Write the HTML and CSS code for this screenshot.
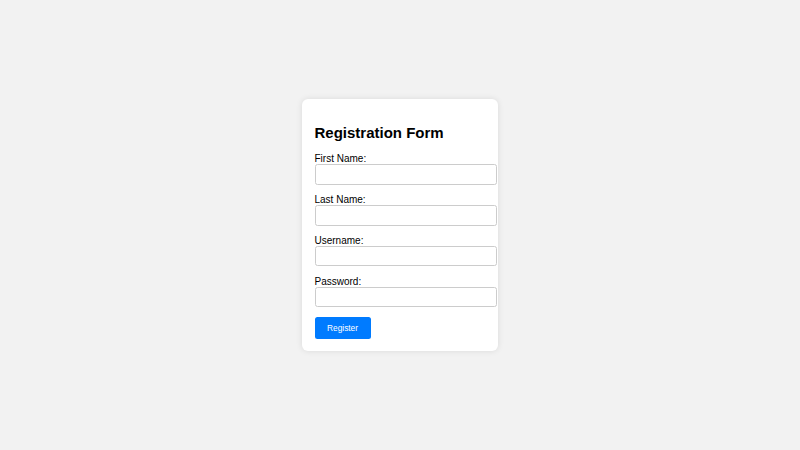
FILE: index.html
```html
<!DOCTYPE html>
<html lang="en">
<head>
<meta charset="utf-8">
<title>Registration Form</title>
<link rel="stylesheet" href="styles.css">
</head>
<body>
<div class="card">
  <h2 class="title">Registration Form</h2>
  <form class="form">
    <label class="label" for="first">First Name:</label>
    <input class="input" type="text" id="first">
    <label class="label" for="last">Last Name:</label>
    <input class="input" type="text" id="last">
    <label class="label" for="user">Username:</label>
    <input class="input" type="text" id="user">
    <label class="label" for="pass">Password:</label>
    <input class="input" type="password" id="pass">
    <button class="btn" type="button">Register</button>
  </form>
</div>
</body>
</html>
```

FILE: styles.css
```css
html, body {
  margin: 0;
  padding: 0;
}
body {
  background: #f2f2f2;
  font-family: "Liberation Sans", Arial, sans-serif;
  height: 100vh;
  display: flex;
  align-items: center;
  justify-content: center;
}
.card {
  background: #fff;
  width: 171px;
  padding: 12.5px;
  border-radius: 6px;
  box-shadow: 0 0 6px rgba(0, 0, 0, 0.1);
}
.title {
  font-size: 15px;
  font-weight: bold;
  margin: 12.45px 0;
  color: #000;
}
.form {
  margin: 0;
}
.label {
  display: block;
  font-size: 10px;
  color: #000;
}
.input {
  display: block;
  box-sizing: border-box;
  width: 182.5px;
  height: 20.5px;
  padding: 0 5px;
  margin: 0 0 9.4px 0;
  border: 1px solid #ccc;
  border-radius: 2.5px;
  font-family: "Liberation Sans", Arial, sans-serif;
  font-size: 8.33px;
  background: #fff;
}
.btn {
  display: block;
  background: #007bff;
  color: #fff;
  border: none;
  border-radius: 2.5px;
  padding: 0 12.5px;
  height: 22px;
  font-family: "Liberation Sans", Arial, sans-serif;
  font-size: 8.33px;
  cursor: pointer;
}
```
